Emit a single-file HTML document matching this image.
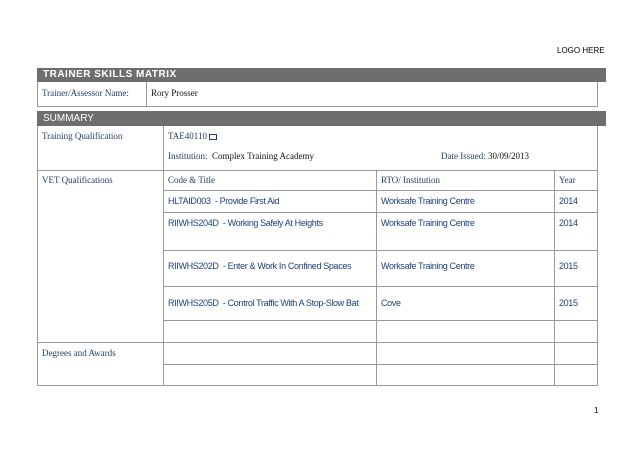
<!DOCTYPE html><html><head><style>
body{margin:0;width:638px;height:451px;background:#fff;position:relative;overflow:hidden;font-family:"Liberation Serif",serif;color:#243f60}
.a{position:absolute}
.s{font-family:"Liberation Sans",sans-serif}
.bar{position:absolute;background:#6e6e6e;color:#fff;font-family:"Liberation Sans",sans-serif;font-size:10px;padding-left:6px;box-sizing:border-box}
.l{position:absolute;background:#999}
.t{position:absolute;font-size:9px;white-space:nowrap}
.q{font-family:"Liberation Sans",sans-serif;font-size:9px;color:#1f3f7a;letter-spacing:-0.35px}
</style></head><body>
<div class="t s" style="left:557px;top:46px;color:#000;font-size:8px">LOGO HERE</div>
<div class="bar" style="left:37px;top:68px;width:569px;height:14px;line-height:14px;font-weight:bold;letter-spacing:.5px">TRAINER SKILLS MATRIX</div>
<div class="l" style="left:37px;top:82px;width:1px;height:24px"></div>
<div class="l" style="left:146px;top:82px;width:1px;height:24px"></div>
<div class="l" style="left:597px;top:82px;width:1px;height:24px"></div>
<div class="l" style="left:37px;top:106px;width:561px;height:1px"></div>
<div class="t" style="left:42px;top:88px">Trainer/Assessor Name:</div>
<div class="t" style="left:151px;top:88px;color:#111">Rory Prosser</div>
<div class="bar" style="left:37px;top:111px;width:569px;height:15px;line-height:15px">SUMMARY</div>
<div class="l" style="left:37px;top:126px;width:1px;height:259px"></div>
<div class="l" style="left:163px;top:126px;width:1px;height:259px"></div>
<div class="l" style="left:597px;top:126px;width:1px;height:259px"></div>
<div class="l" style="left:37px;top:385px;width:561px;height:1px"></div>
<div class="l" style="left:37px;top:170px;width:561px;height:1px"></div>
<div class="l" style="left:37px;top:342px;width:561px;height:1px"></div>
<div class="l" style="left:163px;top:190px;width:435px;height:1px"></div>
<div class="l" style="left:163px;top:212px;width:435px;height:1px"></div>
<div class="l" style="left:163px;top:250px;width:435px;height:1px"></div>
<div class="l" style="left:163px;top:286px;width:435px;height:1px"></div>
<div class="l" style="left:163px;top:320px;width:435px;height:1px"></div>
<div class="l" style="left:163px;top:364px;width:435px;height:1px"></div>
<div class="l" style="left:376px;top:170px;width:1px;height:215px"></div>
<div class="l" style="left:554px;top:170px;width:1px;height:215px"></div>
<div class="t" style="left:42px;top:131px">Training Qualification</div>
<div class="t" style="left:168px;top:131px">TAE40110 <span style="display:inline-block;width:6px;height:4px;border:1px solid #243f60;vertical-align:-1px"></span></div>
<div class="t" style="left:168px;top:151px">Institution: &nbsp;<span style="color:#111">Complex Training Academy</span></div>
<div class="t" style="left:441px;top:151px">Date Issued: <span style="color:#111">30/09/2013</span></div>
<div class="t" style="left:42px;top:175px">VET Qualifications</div>
<div class="t" style="left:168px;top:175px">Code &amp; Title</div>
<div class="t" style="left:381px;top:175px">RTO/ Institution</div>
<div class="t" style="left:559px;top:175px">Year</div>
<div class="t q" style="left:168px;top:196px">HLTAID003 &nbsp;- Provide First Aid</div>
<div class="t q" style="left:381px;top:196px">Worksafe Training Centre</div>
<div class="t q" style="left:559px;top:196px">2014</div>
<div class="t q" style="left:168px;top:218px">RIIWHS204D &nbsp;- Working Safely At Heights</div>
<div class="t q" style="left:381px;top:218px">Worksafe Training Centre</div>
<div class="t q" style="left:559px;top:218px">2014</div>
<div class="t q" style="left:168px;top:261px">RIIWHS202D &nbsp;- Enter &amp; Work In Confined Spaces</div>
<div class="t q" style="left:381px;top:261px">Worksafe Training Centre</div>
<div class="t q" style="left:559px;top:261px">2015</div>
<div class="t q" style="left:168px;top:298px">RIIWHS205D &nbsp;- Control Traffic With A Stop-Slow Bat</div>
<div class="t q" style="left:381px;top:298px">Cove</div>
<div class="t q" style="left:559px;top:298px">2015</div>
<div class="t" style="left:42px;top:348px">Degrees and Awards</div>
<div class="t s" style="left:594px;top:406px;color:#000;font-size:8px">1</div>
</body></html>
